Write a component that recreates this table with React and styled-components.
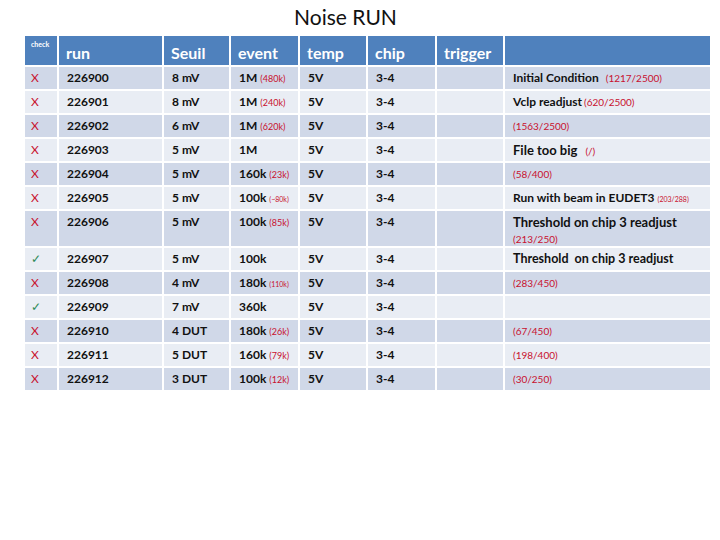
import React from 'react';
import styled, { createGlobalStyle } from 'styled-components';

const GlobalStyle = createGlobalStyle`
  body {
    margin: 0;
    background: #fff;
    font-family: Lato, "Liberation Sans", sans-serif;
  }
`;

const Page = styled.div`
  width: 720px;
  height: 540px;
  padding: 0 9px 0 25px;
  box-sizing: border-box;
`;

const Title = styled.h1`
  margin: 0;
  height: 36px;
  padding: 4px 45px 0 0;
  box-sizing: border-box;
  text-align: center;
  font-weight: 400;
  font-size: 21px;
  line-height: 26px;
  color: #111;
`;

const Grid = styled.div`
  display: grid;
  grid-template-columns: 32px 103px 65px 67px 66px 67px 66px 205px;
  grid-template-rows: 29px repeat(6, 22px) 35px repeat(6, 22px);
  column-gap: 2px;
  row-gap: 2px;
`;

const Head = styled.div`
  background: #4f81bd;
  color: #fff;
  font-weight: 700;
  font-size: ${(p) => (p.$tiny ? '7px' : '16px')};
  padding: ${(p) => (p.$tiny ? '4px 0 0 6px' : '7px 0 0 7px')};
  line-height: ${(p) => (p.$tiny ? '9px' : '20px')};
`;

const Cell = styled.div`
  background: ${(p) => (p.$dark ? '#d0d8e8' : '#e9edf4')};
  color: #111;
  font-weight: 700;
  font-size: 12px;
  line-height: 16px;
  padding: 3px 0 0 8px;
  white-space: nowrap;
  overflow: hidden;
`;

const Mark = styled(Cell)`
  font-weight: 400;
  font-size: 12px;
  padding-left: 6px;
  color: ${(p) => (p.$ok ? '#2e8b57' : '#c8102e')};
`;

const Note = styled.span`
  color: #c8102e;
  font-weight: 400;
  font-size: ${(p) => p.$size || '9px'};
  margin-left: ${(p) => p.$gap || '2px'};
`;

const Big = styled.span`
  font-size: ${(p) => p.$size || '12px'};
`;

const headers = ['run', 'Seuil', 'event', 'temp', 'chip', 'trigger', ''];

const rows = [
  { ok: false, run: '226900', seuil: '8 mV', ev: '1M', evn: '(480k)', note: <>Initial Condition<Note $size="10px" $gap="7px">(1217/2500)</Note></> },
  { ok: false, run: '226901', seuil: '8 mV', ev: '1M', evn: '(240k)', note: <>Vclp readjust<Note $size="10px">(620/2500)</Note></> },
  { ok: false, run: '226902', seuil: '6 mV', ev: '1M', evn: '(620k)', note: <Note $size="10px" $gap="0">(1563/2500)</Note> },
  { ok: false, run: '226903', seuil: '5 mV', ev: '1M', note: <Big $size="13px">File too big<Note $size="10px" $gap="8px">(/)</Note></Big> },
  { ok: false, run: '226904', seuil: '5 mV', ev: '160k', evn: '(23k)', note: <Note $size="10px" $gap="0">(58/400)</Note> },
  { ok: false, run: '226905', seuil: '5 mV', ev: '100k', evn: '(~80k)', tiny: true, note: <>Run with beam in EUDET3<Note $size="7px" $gap="3px">(203/288)</Note></> },
  { ok: false, run: '226906', seuil: '5 mV', ev: '100k', evn: '(85k)', note: <><Big $size="13px">Threshold on chip 3 readjust</Big><br /><Note $size="10px" $gap="0">(213/250)</Note></> },
  { ok: true, run: '226907', seuil: '5 mV', ev: '100k', note: <Big $size="12.5px">Threshold&nbsp; on chip 3 readjust</Big> },
  { ok: false, run: '226908', seuil: '4 mV', ev: '180k', evn: '(110k)', tiny: true, note: <Note $size="10px" $gap="0">(283/450)</Note> },
  { ok: true, run: '226909', seuil: '7 mV', ev: '360k', note: null },
  { ok: false, run: '226910', seuil: '4 DUT', ev: '180k', evn: '(26k)', note: <Note $size="10px" $gap="0">(67/450)</Note> },
  { ok: false, run: '226911', seuil: '5 DUT', ev: '160k', evn: '(79k)', note: <Note $size="10px" $gap="0">(198/400)</Note> },
  { ok: false, run: '226912', seuil: '3 DUT', ev: '100k', evn: '(12k)', note: <Note $size="10px" $gap="0">(30/250)</Note> },
];

export default function App() {
  return (
    <Page>
      <GlobalStyle />
      <Title>Noise RUN</Title>
      <Grid>
        <Head $tiny>check</Head>
        {headers.map((h, i) => (
          <Head key={i}>{h}</Head>
        ))}
        {rows.map((r, i) => {
          const dark = i % 2 === 0;
          return (
            <React.Fragment key={r.run}>
              <Mark $dark={dark} $ok={r.ok}>{r.ok ? '✓' : 'X'}</Mark>
              <Cell $dark={dark}>{r.run}</Cell>
              <Cell $dark={dark}>{r.seuil}</Cell>
              <Cell $dark={dark}>
                {r.ev}
                {r.evn && <Note $size={r.tiny ? '7px' : '9px'} $gap="3px">{r.evn}</Note>}
              </Cell>
              <Cell $dark={dark}>5V</Cell>
              <Cell $dark={dark}>3-4</Cell>
              <Cell $dark={dark} />
              <Cell $dark={dark}>{r.note}</Cell>
            </React.Fragment>
          );
        })}
      </Grid>
    </Page>
  );
}
